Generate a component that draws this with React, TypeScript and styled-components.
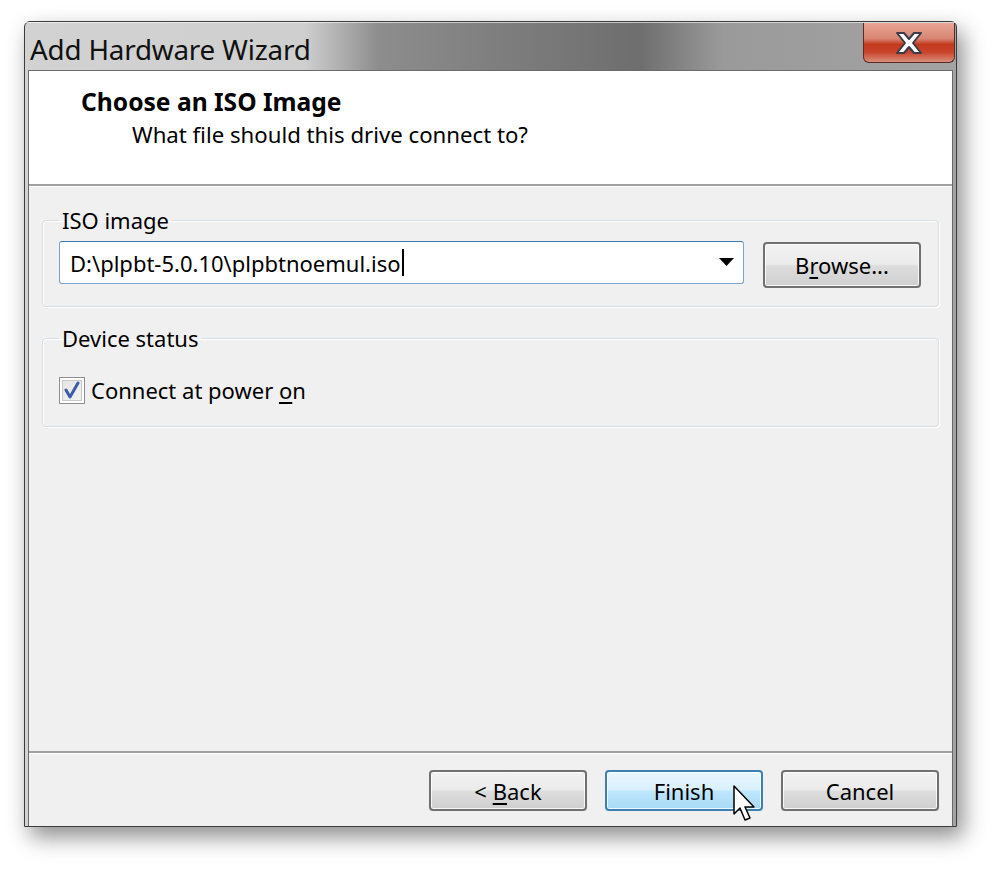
import styled, { createGlobalStyle } from "styled-components";

const Global = createGlobalStyle`
  html, body {
    margin: 0;
    padding: 0;
    background: #ffffff;
  }
  body {
    font-family: "Noto Sans", "Open Sans", "DejaVu Sans", sans-serif;
    color: #000;
  }
`;

const Page = styled.div`
  width: 1000px;
  height: 871px;
  padding: 21px 0 0 24px;
  box-sizing: border-box;
`;

const Window = styled.div`
  width: 933px;
  height: 806px;
  display: flex;
  flex-direction: column;
  background: linear-gradient(90deg, #d2d2d2 0%, #cfcfcf 30%, #8d8d8d 38%, #7d7d7d 52%, #6e6e6e 66%, #9a9a9a 75%, #a3a3a3 100%);
  border: 1px solid #3c3c3c;
  border-radius: 6px 6px 0 0;
  box-shadow: 6px 10px 22px rgba(0, 0, 0, 0.45);
  box-sizing: border-box;
  position: relative;
`;

const TitleBar = styled.div`
  height: 47px;
  display: flex;
  align-items: center;
  justify-content: space-between;
  padding-left: 5px;
  border-top: 1px solid rgba(255, 255, 255, 0.6);
`;

const Title = styled.div`
  font-size: 27.8px;
  color: #111;
  letter-spacing: -0.2px;
  margin-top: 4px;
`;

const CloseButton = styled.div`
  align-self: flex-start;
  width: 92px;
  height: 40px;
  margin-right: 1px;
  border: 1px solid #5a2b24;
  border-top: none;
  border-radius: 0 0 6px 6px;
  background: linear-gradient(180deg, #e9a696 0%, #d88573 40%, #c2381d 55%, #c9452a 75%, #d98f7c 100%);
  display: flex;
  align-items: center;
  justify-content: center;
  box-sizing: border-box;
`;

const Client = styled.div`
  flex: 1;
  margin: 0 3px 0 3px;
  border: 1px solid #6b6b6b;
  border-bottom: none;
  background: #f0f0f0;
  display: flex;
  flex-direction: column;
`;

const Header = styled.div`
  height: 115px;
  flex-shrink: 0;
  background: #ffffff;
  border-bottom: 2px solid #a0a0a0;
  box-shadow: 0 1px 0 #ffffff;
  padding: 15px 0 0 52px;
  box-sizing: border-box;
`;

const HeaderTitle = styled.div`
  font-weight: 700;
  font-size: 24.6px;
  line-height: 32px;
`;

const HeaderSub = styled.div`
  font-size: 22.2px;
  line-height: 32px;
  padding-left: 51px;
  margin-top: 1px;
`;

const Body = styled.div`
  flex: 1;
  padding: 21px 13px 0 13px;
  display: flex;
  flex-direction: column;
  gap: 18px;
`;

const Group = styled.fieldset<{ $pad: string }>`
  margin: 0;
  padding: ${(p) => p.$pad};
  border: 1px solid #d5dfe5;
  border-radius: 4px;
  box-shadow: inset 1px 1px 0 #ffffff, 1px 1px 0 #ffffff;
  min-width: 0;
`;

const Legend = styled.legend`
  font-size: 22px;
  padding: 0 3px;
  margin-left: 0;
  line-height: 26px;
`;

const Row = styled.div`
  display: flex;
  align-items: flex-start;
  gap: 19px;
`;

const Combo = styled.div`
  flex: 1;
  height: 43px;
  background: #ffffff;
  border: 1px solid #7da2ce;
  border-top-color: #3d7bad;
  border-radius: 3px;
  box-sizing: border-box;
  display: flex;
  align-items: center;
  padding: 0 9px 0 10px;
`;

const ComboText = styled.div`
  flex: 1;
  font-size: 22px;
  display: flex;
  align-items: center;
`;

const Caret = styled.span`
  display: inline-block;
  width: 2px;
  height: 27px;
  background: #000;
  margin-left: 1px;
`;

const Button = styled.div<{ $hot?: boolean; $tall?: boolean }>`
  width: 158px;
  height: ${(p) => (p.$tall ? "46px" : "41px")};
  margin-top: ${(p) => (p.$tall ? "1px" : "0")};
  box-sizing: border-box;
  border: 2px solid ${(p) => (p.$hot ? "#3c7fb1" : "#707070")};
  border-radius: 4px;
  background: ${(p) =>
    p.$hot
      ? "linear-gradient(180deg, #eaf6fd 0%, #d9f0fc 48%, #bee6fd 52%, #a7d9f5 100%)"
      : "linear-gradient(180deg, #f2f2f2 0%, #ebebeb 48%, #dddddd 52%, #cfcfcf 100%)"};
  box-shadow: inset 0 0 0 1px rgba(255, 255, 255, 0.8);
  display: flex;
  align-items: center;
  justify-content: center;
  font-size: 22px;
  color: #000;
`;

const U = styled.span`
  text-decoration: underline;
  text-underline-offset: 3px;
`;

const CheckRow = styled.div`
  display: flex;
  align-items: center;
  gap: 6px;
  margin-top: 16px;
  font-size: 22px;
`;

const CheckBox = styled.div`
  width: 26px;
  height: 27px;
  box-sizing: border-box;
  border: 1px solid #8e8f8f;
  background: linear-gradient(135deg, #e4e4e4 0%, #f4f4f4 100%);
  box-shadow: inset 0 0 0 2px #ffffff, inset 0 0 0 3px #c8c8c8;
  display: flex;
  align-items: center;
  justify-content: center;
`;

const Footer = styled.div`
  height: 75px;
  flex-shrink: 0;
  border-top: 2px solid #a0a0a0;
  box-shadow: inset 0 1px 0 #ffffff;
  display: flex;
  justify-content: flex-end;
  align-items: flex-start;
  padding: 17px 13px 0 0;
  gap: 18px;
  box-sizing: border-box;
  position: relative;
`;

const Cursor = styled.svg`
  position: absolute;
  left: 704px;
  top: 32px;
`;

export default function App() {
  return (
    <>
      <Global />
      <Page>
        <Window>
          <TitleBar>
            <Title>Add Hardware Wizard</Title>
            <CloseButton>
              <svg width="40" height="28" viewBox="0 0 40 28">
                <path
                  d="M8 4 L15 4 L20 10 L25 4 L32 4 L24 14 L32 24 L25 24 L20 18 L15 24 L8 24 L16 14 Z"
                  fill="#ffffff"
                  stroke="#3b3b4a"
                  strokeWidth="2"
                  strokeLinejoin="round"
                />
              </svg>
            </CloseButton>
          </TitleBar>
          <Client>
            <Header>
              <HeaderTitle>Choose an ISO Image</HeaderTitle>
              <HeaderSub>What file should this drive connect to?</HeaderSub>
            </Header>
            <Body>
              <Group $pad="8px 17px 18px 16px">
                <Legend>ISO image</Legend>
                <Row>
                  <Combo>
                    <ComboText>
                      <span>D:\plpbt-5.0.10\plpbtnoemul.iso</span>
                      <Caret />
                    </ComboText>
                    <svg width="15" height="9" viewBox="0 0 15 9">
                      <path d="M0 0 L15 0 L7.5 8 Z" fill="#000" />
                    </svg>
                  </Combo>
                  <Button $tall>
                    <span>
                      B<U>r</U>owse...
                    </span>
                  </Button>
                </Row>
              </Group>
              <Group $pad="8px 17px 21px 16px">
                <Legend>Device status</Legend>
                <CheckRow>
                  <CheckBox>
                    <svg width="16" height="18" viewBox="0 0 16 18">
                      <path
                        d="M2 9 L6 16 L14 2"
                        fill="none"
                        stroke="#3d5da8"
                        strokeWidth="3"
                        strokeLinecap="round"
                        strokeLinejoin="round"
                      />
                    </svg>
                  </CheckBox>
                  <span>
                    Connect at power <U>o</U>n
                  </span>
                </CheckRow>
              </Group>
            </Body>
            <Footer>
              <Button>
                <span>
                  {"< "}
                  <U>B</U>ack
                </span>
              </Button>
              <Button $hot>
                <span>Finish</span>
              </Button>
              <Button>
                <span>Cancel</span>
              </Button>
              <Cursor width="26" height="40" viewBox="0 0 26 40">
                <path
                  d="M1 1 L1 29 L7 23 L12 35 L17 33 L12 22 L21 22 Z"
                  fill="#ffffff"
                  stroke="#000000"
                  strokeWidth="1.5"
                  strokeLinejoin="round"
                />
              </Cursor>
            </Footer>
          </Client>
        </Window>
      </Page>
    </>
  );
}
